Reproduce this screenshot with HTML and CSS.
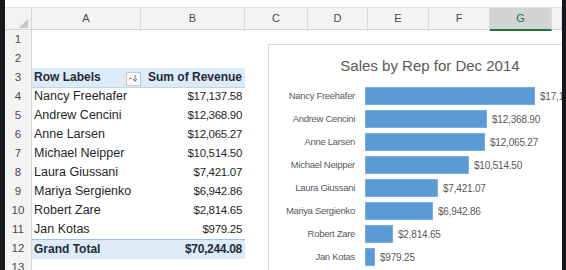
FILE: index.html
```html
<!DOCTYPE html>
<html lang="en">

<head>
    <meta charset="UTF-8">
    <title>Sales by Rep</title>
    <link rel="stylesheet" href="styles.css">
</head>

<body>

    <div class="sheet">
        <!-- Column headers -->
        <div class="row col-heads">
            <div class="corner"><span class="tri"></span></div>
            <div class="ch">A</div>
            <div class="ch">B</div>
            <div class="ch">C</div>
            <div class="ch">D</div>
            <div class="ch">E</div>
            <div class="ch">F</div>
            <div class="ch sel">G</div>
            <div class="ch"></div>
        </div>

        <div class="row"><div class="rh">1</div><div></div><div></div></div>
        <div class="row"><div class="rh">2</div><div></div><div></div></div>
        <div class="row">
            <div class="rh">3</div>
            <div class="cell pv-head bold">Row Labels <span class="filter"><svg width="11" height="9" viewBox="0 0 11 9"><path d="M1 4.5h3" stroke="#8a8a8a" stroke-width="1"/><path d="M7 1v6M5 5l2 2.3L9 5" stroke="#7a7a7a" stroke-width="1" fill="none"/></svg></span></div>
            <div class="cell pv-head bold num">Sum of Revenue</div>
        </div>
        <div class="row"><div class="rh">4</div><div class="cell">Nancy Freehafer</div><div class="cell num">$17,137.58</div></div>
        <div class="row"><div class="rh">5</div><div class="cell">Andrew Cencini</div><div class="cell num">$12,368.90</div></div>
        <div class="row"><div class="rh">6</div><div class="cell">Anne Larsen</div><div class="cell num">$12,065.27</div></div>
        <div class="row"><div class="rh">7</div><div class="cell">Michael Neipper</div><div class="cell num">$10,514.50</div></div>
        <div class="row"><div class="rh">8</div><div class="cell">Laura Giussani</div><div class="cell num">$7,421.07</div></div>
        <div class="row"><div class="rh">9</div><div class="cell">Mariya Sergienko</div><div class="cell num">$6,942.86</div></div>
        <div class="row"><div class="rh">10</div><div class="cell">Robert Zare</div><div class="cell num">$2,814.65</div></div>
        <div class="row"><div class="rh">11</div><div class="cell">Jan Kotas</div><div class="cell num">$979.25</div></div>
        <div class="row">
            <div class="rh">12</div>
            <div class="cell pv-total bold">Grand Total</div>
            <div class="cell pv-total bold num">$70,244.08</div>
        </div>
        <div class="row"><div class="rh">13</div><div></div><div></div></div>

        <!-- Chart object floating over the grid -->
        <div class="chart">
            <div class="chart-title">Sales by Rep for Dec 2014</div>
            <div class="bars">
                <div class="lbl">Nancy Freehafer</div>
                <div class="bar-wrap"><div class="bar" style="width:170px"></div><span class="val">$17,137.58</span></div>
                <div class="lbl">Andrew Cencini</div>
                <div class="bar-wrap"><div class="bar" style="width:122px"></div><span class="val">$12,368.90</span></div>
                <div class="lbl">Anne Larsen</div>
                <div class="bar-wrap"><div class="bar" style="width:120px"></div><span class="val">$12,065.27</span></div>
                <div class="lbl">Michael Neipper</div>
                <div class="bar-wrap"><div class="bar" style="width:104px"></div><span class="val">$10,514.50</span></div>
                <div class="lbl">Laura Giussani</div>
                <div class="bar-wrap"><div class="bar" style="width:73px"></div><span class="val">$7,421.07</span></div>
                <div class="lbl">Mariya Sergienko</div>
                <div class="bar-wrap"><div class="bar" style="width:68px"></div><span class="val">$6,942.86</span></div>
                <div class="lbl">Robert Zare</div>
                <div class="bar-wrap"><div class="bar" style="width:28px"></div><span class="val">$2,814.65</span></div>
                <div class="lbl">Jan Kotas</div>
                <div class="bar-wrap"><div class="bar" style="width:10px"></div><span class="val">$979.25</span></div>
            </div>
        </div>
    </div>

</body>

</html>
```

FILE: styles.css
```css
body {
    margin: 0;
    height: 270px;
    overflow: hidden;
    background: #17171d;
    font-family: "Liberation Sans", Arial, sans-serif;
}

.sheet {
    position: relative;
    margin-left: 5px;
    width: 557px;
    height: 270px;
    padding-top: 7px;
    box-sizing: border-box;
    background: white;
    overflow: hidden;
}

.row {
    display: grid;
    grid-template-columns: 27px 109px 104px 63px 60px 61px 61px 62px 1fr;
    height: 19px;
}

/* column headers */
.col-heads {
    height: 23px;
    background: #f3f3f3;
    border-top: 1px solid #e2e2e2;
    border-bottom: 1px solid #d4d4d4;
    box-sizing: border-box;
}

.corner {
    position: relative;
    border-right: 1px solid #d4d4d4;
}

.tri {
    position: absolute;
    right: 3px;
    bottom: 3px;
    width: 0;
    height: 0;
    border-left: 9px solid transparent;
    border-bottom: 9px solid #c6c6c6;
}

.ch {
    border-right: 1px solid #dadada;
    text-align: center;
    font-size: 11px;
    line-height: 21px;
    color: #4a4a4a;
}

.ch.sel {
    background: #d4d4d4;
    color: #217346;
    border-bottom: 2px solid #217346;
}

/* row headers */
.rh {
    background: #f3f3f3;
    border-right: 1px solid #d4d4d4;
    border-bottom: 1px solid #dcdcdc;
    box-sizing: border-box;
    text-align: center;
    font-size: 11.5px;
    line-height: 19px;
    color: #4a4a4a;
}

.cell {
    padding: 0 3px 0 2px;
    font-size: 12.5px;
    line-height: 19px;
    color: #262626;
    white-space: nowrap;
}

.num {
    text-align: right;
    font-size: 11.5px;
    letter-spacing: -0.3px;
}

.bold {
    font-weight: bold;
    font-size: 12px;
    color: #1f2a3a;
}

.pv-head {
    background: #ddebf7;
    border-bottom: 1px solid #bcd6ee;
    box-sizing: border-box;
    letter-spacing: 0;
}

.pv-head.num {
    letter-spacing: 0;
}

.pv-total {
    background: #ddebf7;
    border-top: 1px solid #9bc2e6;
    box-sizing: border-box;
    line-height: 18px;
}

.filter {
    display: inline-flex;
    align-items: center;
    justify-content: center;
    width: 13px;
    height: 12px;
    margin-left: 22px;
    vertical-align: -2px;
    background: #f8f8f8;
    border: 1px solid #c8c8c8;
}

/* chart */
.chart {
    position: absolute;
    left: 263px;
    top: 44px;
    width: 324px;
    height: 260px;
    background: white;
    border: 1px solid #d9d9d9;
    padding-top: 12px;
    box-sizing: border-box;
}

.chart-title {
    text-align: center;
    font-size: 15px;
    line-height: 18px;
    color: #595959;
}

.bars {
    display: grid;
    grid-template-columns: 86px 1fr;
    grid-auto-rows: 18px;
    column-gap: 10px;
    row-gap: 5px;
    margin-top: 12px;
}

.lbl {
    text-align: right;
    font-size: 9.5px;
    line-height: 18px;
    color: #595959;
    white-space: nowrap;
    letter-spacing: -0.3px;
}

.bar-wrap {
    display: flex;
    align-items: center;
    gap: 5px;
}

.bar {
    height: 18px;
    background: #5b9bd5;
    box-shadow: inset 0 0 0 1px #7aaee0;
}

.val {
    font-size: 10px;
    color: #595959;
    white-space: nowrap;
    letter-spacing: -0.2px;
}
```
